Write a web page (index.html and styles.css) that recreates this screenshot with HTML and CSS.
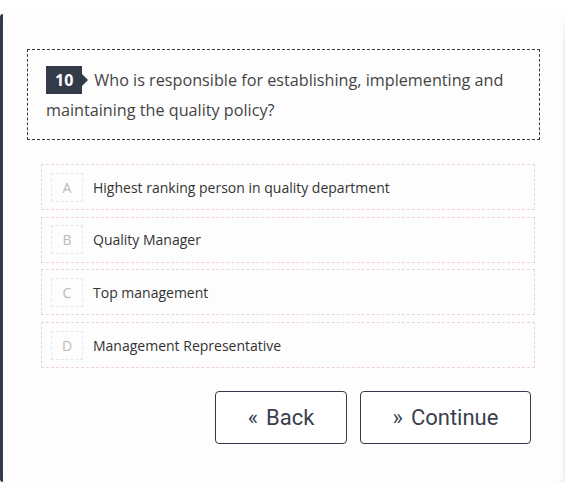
FILE: index.html
```html
<!DOCTYPE html>
<html lang="en">
<head>
    <meta charset="UTF-8">
    <meta name="viewport" content="width=device-width, initial-scale=1.0">
    <title>Quiz</title>
    <link rel="stylesheet" href="styles.css">
</head>
<body>
    <div class="card">
        <div class="question">
            <span class="num">10</span><span class="q-text">Who is responsible for establishing, implementing and maintaining the quality policy?</span>
        </div>

        <div class="options">
            <div class="option"><span class="letter">A</span><span class="text">Highest ranking person in quality department</span></div>
            <div class="option"><span class="letter">B</span><span class="text">Quality Manager</span></div>
            <div class="option"><span class="letter">C</span><span class="text">Top management</span></div>
            <div class="option"><span class="letter">D</span><span class="text">Management Representative</span></div>
        </div>

        <div class="actions">
            <button class="btn back"><span class="arr">&laquo;</span>Back</button>
            <button class="btn next"><span class="arr">&raquo;</span>Continue</button>
        </div>
    </div>
</body>
</html>
```

FILE: styles.css
```css
body {
    margin: 0;
    background-color: #fff;
    font-family: "Open Sans", Arial, sans-serif;
}

.card {
    margin-top: 14px;
    width: 563px;
    box-sizing: border-box;
    background-color: #fdfdfd;
    border-left: 3px solid #333a4a;
    border-radius: 3px 6px 6px 3px;
    box-shadow: 0 8px 16px rgba(0, 0, 0, 0.13);
    padding: 35px 20px 38px 24px;
}

.question {
    width: 513px;
    height: 91px;
    box-sizing: border-box;
    border: 1px dashed #333a4a;
    padding: 15px 18px 0 18px;
    font-size: 16.2px;
    line-height: 30px;
    color: #444;
}

.num {
    position: relative;
    display: inline-block;
    background-color: #333a4a;
    color: #fff;
    font-weight: 700;
    font-size: 16px;
    line-height: 28px;
    height: 28px;
    padding: 0 9px;
    margin-right: 12px;
    vertical-align: top;
    margin-top: 1px;
}

.num::after {
    content: "";
    position: absolute;
    right: -6px;
    top: 8px;
    border-top: 6px solid transparent;
    border-bottom: 6px solid transparent;
    border-left: 6px solid #333a4a;
}

.options {
    margin: 24px 0 0 14px;
    width: 494px;
}

.option {
    display: flex;
    align-items: center;
    height: 46px;
    box-sizing: border-box;
    border: 1px dashed #efd3dc;
    padding-left: 9px;
    margin-bottom: 6.7px;
}

.letter {
    width: 32px;
    height: 29px;
    box-sizing: border-box;
    border: 1px dashed #e6e6e6;
    display: flex;
    align-items: center;
    justify-content: center;
    color: #bbb;
    font-size: 14px;
}

.text {
    margin-left: 10px;
    font-size: 14px;
    color: #333;
}

.actions {
    display: flex;
    justify-content: flex-end;
    gap: 13px;
    margin-top: 23px;
    width: 504px;
}

.btn {
    height: 53px;
    box-sizing: border-box;
    background-color: #fff;
    border: 1px solid #333a4a;
    border-radius: 4px;
    font-family: Roboto, Arial, sans-serif;
    font-size: 22px;
    color: #3a3f50;
    cursor: pointer;
}

.arr {
    margin-right: 8px;
}

.back {
    width: 132px;
}

.next {
    width: 171px;
}
```
